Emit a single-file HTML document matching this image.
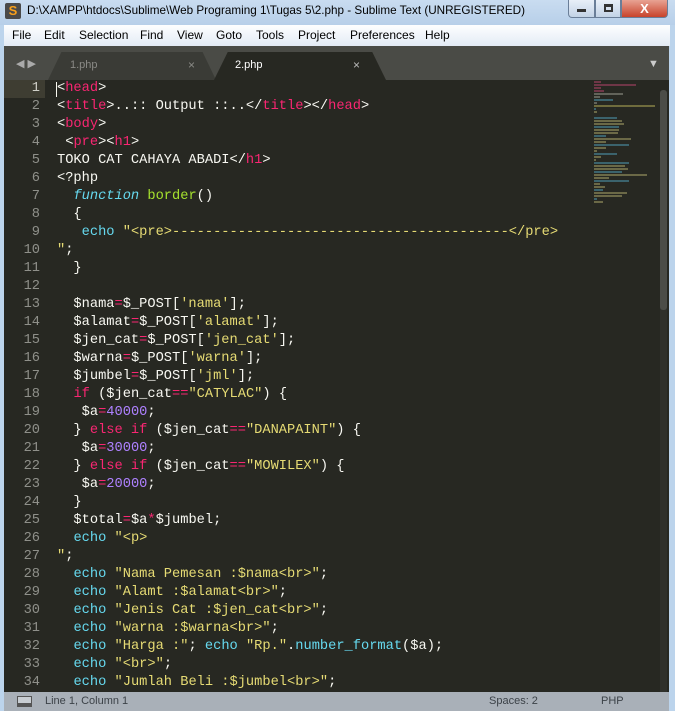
<!DOCTYPE html>
<html><head><meta charset="utf-8"><style>
*{margin:0;padding:0;box-sizing:border-box}
body{width:675px;height:711px;overflow:hidden;background:#bcd4ec;font-family:"Liberation Sans",sans-serif;position:relative}
#title{position:absolute;left:0;top:0;width:675px;height:25px;background:linear-gradient(#c9dcf0,#b7cfe9)}
#title .ic{position:absolute;left:5px;top:3px;width:16px;height:16px;background:#4a4a4a;border-radius:2px;color:#f9a01b;font:bold 13px "Liberation Sans";text-align:center;line-height:16px}
#title .t{position:absolute;left:27px;top:4px;font-size:11.7px;color:#000}
.wb{position:absolute;top:0;height:18px;border:1px solid #6a7e98;border-top:none;background:linear-gradient(#e8eff8,#c3d3e6)}
#menu{position:absolute;left:4px;top:25px;width:666px;height:21px;background:linear-gradient(#fdfeff,#e3ebf5);font-size:12px}
#menu span{position:absolute;top:3px}
#tabs{position:absolute;left:4px;top:46px;width:665px;height:34px;background:#4a4b46}
#ed{position:absolute;left:4px;top:80px;width:665px;height:612px;background:#272822;overflow:hidden}
.ln{position:absolute;left:0;width:36px;text-align:right;font:13.7px "Liberation Mono",monospace;color:#8f908a;height:18px;line-height:18px}
.cl{position:absolute;left:53px;font:13.7px "Liberation Mono",monospace;color:#f8f8f2;height:18px;line-height:18px;white-space:pre}
.k{color:#f92672}.s{color:#e6db74}.c{color:#66d9ef}.g{color:#a6e22e}.n{color:#ae81ff}.i{font-style:italic;color:#66d9ef}
#status{position:absolute;left:4px;top:692px;width:665px;height:19px;background:#a9b0b8;font-size:11px;color:#3c4248}
.mm{position:absolute;height:2px;opacity:.6}
</style></head><body>
<div id="title"><div class="ic">S</div><div class="t">D:\XAMPP\htdocs\Sublime\Web Programing 1\Tugas 5\2.php - Sublime Text (UNREGISTERED)</div>
<div class="wb" style="left:568px;width:27px;border-radius:0 0 0 4px"><div style="margin:9px auto 0;width:9px;height:3px;background:#333"></div></div>
<div class="wb" style="left:595px;width:26px"><div style="margin:4px auto 0;width:9px;height:8px;border:2px solid #333;border-top-width:3px"></div></div>
<div class="wb" style="left:621px;width:47px;background:linear-gradient(#e8a393,#c8432b);border-radius:0 0 4px 0;color:#fff;font:bold 13px 'Liberation Sans';text-align:center;line-height:17px">X</div>
</div>
<div id="menu"><span style="left:8px">File</span><span style="left:40px">Edit</span><span style="left:75px">Selection</span><span style="left:136px">Find</span><span style="left:173px">View</span><span style="left:212px">Goto</span><span style="left:252px">Tools</span><span style="left:294px">Project</span><span style="left:346px">Preferences</span><span style="left:421px">Help</span></div>
<div id="tabs">
<div style="position:absolute;left:12px;top:11px;color:#aaa;font-size:11px">◀ ▶</div>
<div style="position:absolute;left:44px;top:6px;width:168px;height:28px;background:#3a3b36;clip-path:polygon(8% 0,92% 0,100% 100%,0 100%)"></div>
<div style="position:absolute;left:66px;top:13px;color:#8a8a86;font-size:11px">1.php</div>
<div style="position:absolute;left:184px;top:12px;color:#8a8a86;font-size:12px">×</div>
<div style="position:absolute;left:210px;top:6px;width:172px;height:28px;background:#272822;clip-path:polygon(8% 0,92% 0,100% 100%,0 100%)"></div>
<div style="position:absolute;left:231px;top:13px;color:#fff;font-size:11px">2.php</div>
<div style="position:absolute;left:349px;top:12px;color:#bbb;font-size:12px">×</div>
<div style="position:absolute;left:644px;top:12px;color:#ccc;font-size:11px">▼</div>
</div>
<div id="ed">
<div style="position:absolute;left:0;top:0;width:41px;height:18px;background:#3e3d32"></div>
<div style="position:absolute;left:52px;top:2px;width:1px;height:15px;background:#f8f8f0"></div>
<div style="position:absolute;left:656px;top:227px;width:7px;height:385px;background:#2f302b"></div>
<div style="position:absolute;left:656px;top:10px;width:7px;height:220px;background:#4c4d48;border-radius:3px"></div>
<div id="mini"></div>
<div id="code"></div>
</div>
<div id="status">
<div style="position:absolute;left:13px;top:4px;width:15px;height:11px;border:1px solid #555;border-bottom:4px solid #555;background:#c8cdd2"></div>
<span style="position:absolute;left:41px;top:3px">Line 1, Column 1</span>
<span style="position:absolute;left:485px;top:3px">Spaces: 2</span>
<span style="position:absolute;left:597px;top:3px">PHP</span>
</div>
<script>
var L=[
'&lt;<span class="k">head</span>&gt;',
'&lt;<span class="k">title</span>&gt;..:: Output ::..&lt;/<span class="k">title</span>&gt;&lt;/<span class="k">head</span>&gt;',
'&lt;<span class="k">body</span>&gt;',
' &lt;<span class="k">pre</span>&gt;&lt;<span class="k">h1</span>&gt;',
'TOKO CAT CAHAYA ABADI&lt;/<span class="k">h1</span>&gt;',
'&lt;?php',
'  <span class="i">function</span> <span class="g">border</span>()',
'  {',
'   <span class="c">echo</span> <span class="s">"&lt;pre&gt;-----------------------------------------&lt;/pre&gt;</span>',
'<span class="s">"</span>;',
'  }',
'',
'  $nama<span class="k">=</span>$_POST[<span class="s">\'nama\'</span>];',
'  $alamat<span class="k">=</span>$_POST[<span class="s">\'alamat\'</span>];',
'  $jen_cat<span class="k">=</span>$_POST[<span class="s">\'jen_cat\'</span>];',
'  $warna<span class="k">=</span>$_POST[<span class="s">\'warna\'</span>];',
'  $jumbel<span class="k">=</span>$_POST[<span class="s">\'jml\'</span>];',
'  <span class="k">if</span> ($jen_cat<span class="k">==</span><span class="s">"CATYLAC"</span>) {',
'   $a<span class="k">=</span><span class="n">40000</span>;',
'  } <span class="k">else if</span> ($jen_cat<span class="k">==</span><span class="s">"DANAPAINT"</span>) {',
'   $a<span class="k">=</span><span class="n">30000</span>;',
'  } <span class="k">else if</span> ($jen_cat<span class="k">==</span><span class="s">"MOWILEX"</span>) {',
'   $a<span class="k">=</span><span class="n">20000</span>;',
'  }',
'  $total<span class="k">=</span>$a<span class="k">*</span>$jumbel;',
'  <span class="c">echo</span> <span class="s">"&lt;p&gt;</span>',
'<span class="s">"</span>;',
'  <span class="c">echo</span> <span class="s">"Nama Pemesan :$nama&lt;br&gt;"</span>;',
'  <span class="c">echo</span> <span class="s">"Alamt :$alamat&lt;br&gt;"</span>;',
'  <span class="c">echo</span> <span class="s">"Jenis Cat :$jen_cat&lt;br&gt;"</span>;',
'  <span class="c">echo</span> <span class="s">"warna :$warna&lt;br&gt;"</span>;',
'  <span class="c">echo</span> <span class="s">"Harga :"</span>; <span class="c">echo</span> <span class="s">"Rp."</span>.<span class="c">number_format</span>($a);',
'  <span class="c">echo</span> <span class="s">"&lt;br&gt;"</span>;',
'  <span class="c">echo</span> <span class="s">"Jumlah Beli :$jumbel&lt;br&gt;"</span>;'
];
var h='',m='';
var W=[6,38,6,9,26,5,17,3,55,2,3,0,21,25,27,23,23,22,11,34,11,32,11,3,21,6,2,32,28,31,25,48,14,32,5,10,8,30,25,3,8];
var C=['#a04060','#a04060','#a04060','#a04060','#8a8a80','#8a8a80','#4a8aa0','#8a8a80','#a09a50'];
for(var i=0;i<W.length;i++){m+='<div class="mm" style="left:590px;top:'+(1+i*3)+'px;width:'+W[i]*1.1+'px;background:'+(C[i]||(i%3?'#9a9460':'#4a8aa0'))+'"></div>';}
document.getElementById('mini').innerHTML=m;
for(var i=0;i<L.length;i++){var t=i*18;
h+='<div class="ln" style="top:'+t+'px;'+(i==0?'color:#d0d0c8':'')+'">'+(i+1)+'</div><div class="cl" style="top:'+t+'px">'+L[i]+'</div>';}
document.getElementById('code').innerHTML=h;
</script>
</body></html>
